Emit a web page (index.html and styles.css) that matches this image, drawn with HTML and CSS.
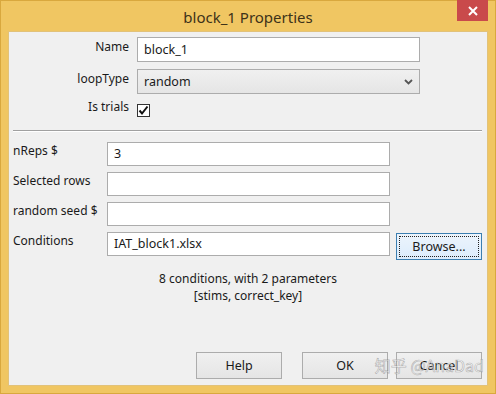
FILE: index.html
```html
<!DOCTYPE html>
<html>
<head>
<meta charset="utf-8">
<link rel="stylesheet" href="styles.css">
</head>
<body>
<div class="window">
  <div class="titlebar">
    <div class="title">block_1 Properties</div>
    <div class="close">
      <svg width="12" height="10" viewBox="0 0 12 10"><path d="M2 1 L10 9 M10 1 L2 9" stroke="#fff" stroke-width="2"/></svg>
    </div>
  </div>
  <div class="client">
    <div class="top">
      <div class="lbl">Name</div>
      <div class="field input">block_1</div>
      <div class="lbl">loopType</div>
      <div class="field select">random
        <svg class="chev" width="9" height="6" viewBox="0 0 9 6"><path d="M1 1 L4.5 4.5 L8 1" stroke="#555" stroke-width="1.8" fill="none"/></svg>
      </div>
      <div class="lbl">Is trials</div>
      <div class="checkrow"><span class="check"><svg width="11" height="11" viewBox="0 0 11 11"><path d="M1.5 5.5 L4 8.5 L9.5 1.5" stroke="#111" stroke-width="2" fill="none"/></svg></span></div>
    </div>
    <div class="sep"></div>
    <div class="bottom">
      <div class="lbl2">nReps $</div>
      <div class="field input">3</div>
      <div></div>
      <div class="lbl2">Selected rows</div>
      <div class="field input"></div>
      <div></div>
      <div class="lbl2">random seed $</div>
      <div class="field input"></div>
      <div></div>
      <div class="lbl2">Conditions</div>
      <div class="field input">IAT_block1.xlsx</div>
      <div class="btn browse"><span class="focus">Browse...</span></div>
    </div>
    <div class="info">
      <div>8 conditions, with 2 parameters</div>
      <div>[stims, correct_key]</div>
    </div>
    <div class="buttons">
      <div class="btn">Help</div>
      <div class="btn ok">OK</div>
      <div class="btn">Cancel</div>
    </div>
    <div class="watermark">知乎 @AnaDad</div>
  </div>
</div>
</body>
</html>
```
FILE: styles.css
```css
* { box-sizing: border-box; }
html, body { margin: 0; padding: 0; }
body {
  width: 496px; height: 394px; overflow: hidden;
  font-family: "Noto Sans", "Open Sans", sans-serif;
  font-size: 12px; color: #1a1a1a;
}
.window {
  width: 496px; height: 394px;
  background: #f0c662;
  border: 1px solid #d9a83e;
  display: flex; flex-direction: column;
}
.titlebar {
  height: 30px; position: relative;
  display: flex; align-items: center; justify-content: center;
}
.title {
  font-size: 15px; color: #3d3219; margin-top: 2px;
}
.close {
  position: absolute; right: 7px; top: -1px;
  width: 31px; height: 21px; background: #c94a4b;
  display: flex; align-items: center; justify-content: center;
}
.client {
  flex: 1; margin: 0 7px 7px 7px;
  background: #f0f0f0; border: 1px solid #e2c279;
  position: relative;
  display: flex; flex-direction: column;
}
.top {
  display: grid;
  grid-template-columns: 120px 283px;
  column-gap: 8px; row-gap: 7px;
  padding-top: 5px;
  align-items: center;
}
.lbl { text-align: right; line-height: 16px; margin-top: -6px; }
.field {
  height: 25px; border: 1px solid #acacac; background: #fff;
  padding: 0 6px; line-height: 23px; font-size: 12.5px;
}
.select {
  background: linear-gradient(#f0f0f0, #e5e5e5);
  position: relative;
}
.chev { position: absolute; right: 6px; top: 9px; }
.checkrow { height: 18px; display: flex; align-items: center; }
.check {
  width: 13px; height: 13px; border: 1px solid #333; background: #fff;
  display: flex; align-items: center; justify-content: center;
}
.sep {
  height: 1px; background: #a0a0a0; margin: 11px 5px 0 4px;
  border-bottom: 1px solid #fff; box-sizing: content-box;
}
.bottom {
  display: grid;
  grid-template-columns: 88px 283px 85px;
  column-gap: 6px; row-gap: 6px;
  padding: 10px 0 0 4px;
  align-items: start;
}
.bottom .field { height: 24px; line-height: 22px; }
.lbl2 { line-height: 16px; padding-top: 1px; }
.btn {
  height: 27px; border: 1px solid #acacac;
  background: linear-gradient(#f0f0f0, #e5e5e5);
  display: flex; align-items: center; justify-content: center;
  font-size: 12.5px; width: 86px;
}
.browse {
  border-color: #3c7fb1; margin-top: 1px; padding: 2px;
  background: linear-gradient(#ecf4fc, #dcecfc);
}
.browse .focus {
  width: 100%; height: 100%; border: 1px dotted #222;
  display: flex; align-items: center; justify-content: center;
}
.info {
  text-align: center; line-height: 17px; margin-top: 10px;
}
.buttons {
  margin-top: auto; margin-bottom: 6px; margin-right: 5px;
  display: flex; justify-content: flex-end; gap: 0;
}
.buttons .btn { margin-left: 20px; }
.buttons .btn.ok + .btn { margin-left: 8px; }
.watermark {
  position: absolute; right: 3px; bottom: 8px;
  font-size: 16px; color: rgba(255,255,255,0.55);
  -webkit-text-stroke: 0.6px rgba(120,120,120,0.55);
  font-family: "Noto Sans CJK SC", "Noto Sans", sans-serif;
}
```
